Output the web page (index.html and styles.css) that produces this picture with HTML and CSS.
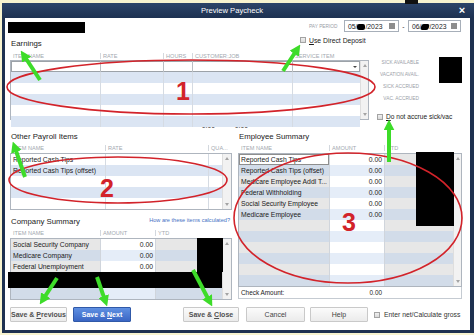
FILE: index.html
```html
<!DOCTYPE html>
<html>
<head>
<meta charset="utf-8">
<link rel="stylesheet" href="styles.css">
</head>
<body>
<div class="window">
  <div class="titlebar"><span class="title">Preview Paycheck</span><span class="close">×</span></div>
  <div class="pane">
    <div class="top">
      <div class="top-left">
        <div class="redact-name"></div>
        <div class="sec-title earn-title">Earnings</div>
      </div>
      <div class="top-right">
        <div class="period">
          <span class="cap period-label">PAY PERIOD</span>
          <span class="date"><span>05/<i class="scrib"></i>/2023</span><span class="cal"></span></span>
          <span class="dash">-</span>
          <span class="date date2"><span>06/<i class="scrib scrib2"></i>/2023</span><span class="cal"></span></span>
        </div>
        <div class="dd"><span class="cb"></span><span><u>U</u>se Direct Deposit</span></div>
      </div>
    </div>

    <div class="earn">
      <div class="earn-table">
        <div class="hdr earn-hdr"><span>ITEM NAME</span><span>RATE</span><span>HOURS</span><span>CUSTOMER:JOB</span><span>SERVICE ITEM</span></div>
        <div class="tbl earn-tbl">
          <div class="rows">
            <div class="row earn-row input-row"><span></span><span></span><span></span><span></span><span class="combo"><i class="tri"></i></span></div>
            <div class="row earn-row"><span></span><span></span><span></span><span></span><span></span></div>
            <div class="row earn-row"><span></span><span></span><span></span><span></span><span></span></div>
            <div class="row earn-row"><span></span><span></span><span></span><span></span><span></span></div>
            <div class="row earn-row"><span></span><span></span><span></span><span></span><span></span></div>
            <div class="row earn-row"><span></span><span></span><span></span><span></span><span></span></div>
          </div>
          <div class="scroll"><i class="up"></i><i class="down"></i></div>
        </div>
      </div>
      <div class="side">
        <div class="sick">
          <div class="sick-labels">
            <div>SICK AVAILABLE</div>
            <div>VACATION AVAIL.</div>
            <div>SICK ACCRUED</div>
            <div>VAC. ACCRUED</div>
          </div>
          <div class="sick-redact"></div>
        </div>
        <div class="accrue"><span class="cb"></span><span><u>D</u>o not accrue sick/vac</span></div>
      </div>
    </div>

    <div class="totals">
      <span class="tot-label">TOTALS</span>
      <span class="tot1">0.00</span>
      <span class="tot2">0.00</span>
      <span class="hrs">hrs</span>
    </div>

    <div class="lower">
      <div class="lcol">
        <div class="sec-title">Other Payroll Items</div>
        <div class="hdr opi-hdr"><span>ITEM NAME</span><span>RATE</span><span>QUA...</span></div>
        <div class="tbl opi-tbl">
          <div class="rows striped">
            <div class="row opi-row"><span>Reported Cash Tips</span><span></span><span></span></div>
            <div class="row opi-row"><span>Reported Cash Tips (offset)</span><span></span><span></span></div>
            <div class="row opi-row"><span></span><span></span><span></span></div>
            <div class="row opi-row"><span></span><span></span><span></span></div>
            <div class="row opi-row"><span></span><span></span><span></span></div>
          </div>
          <div class="scroll"><i class="up"></i><i class="down"></i></div>
        </div>

        <div class="cs-title">
          <span class="sec-title">Company Summary</span>
          <span class="link">How are these items calculated?</span>
        </div>
        <div class="hdr cs-hdr"><span>ITEM NAME</span><span>AMOUNT</span><span>YTD</span></div>
        <div class="tbl cs-tbl">
          <div class="rows sum-rows">
            <div class="row cs-row"><span>Social Security Company</span><span class="amt">0.00</span><span></span></div>
            <div class="row cs-row"><span>Medicare Company</span><span class="amt">0.00</span><span></span></div>
            <div class="row cs-row"><span>Federal Unemployment</span><span class="amt">0.00</span><span></span></div>
            <div class="redact-bar"></div>
            <div class="row cs-row blue"><span></span><span></span><span></span></div>
          </div>
          <div class="scroll"><i class="up"></i><i class="down"></i></div>
          <div class="redact-ytd"></div>
        </div>
      </div>

      <div class="rcol">
        <div class="sec-title">Employee Summary</div>
        <div class="hdr es-hdr"><span>ITEM NAME</span><span>AMOUNT</span><span>YTD</span></div>
        <div class="tbl es-tbl">
          <div class="rows sum-rows">
            <div class="row es-row selected"><span>Reported Cash Tips</span><span class="amt">0.00</span><span></span></div>
            <div class="row es-row"><span>Reported Cash Tips (offset)</span><span class="amt">0.00</span><span></span></div>
            <div class="row es-row"><span>Medicare Employee Addl T...</span><span class="amt">0.00</span><span></span></div>
            <div class="row es-row"><span>Federal Withholding</span><span class="amt">0.00</span><span></span></div>
            <div class="row es-row"><span>Social Security Employee</span><span class="amt">0.00</span><span></span></div>
            <div class="row es-row"><span>Medicare Employee</span><span class="amt">0.00</span><span></span></div>
            <div class="row es-row"><span></span><span></span><span></span></div>
            <div class="row es-row"><span></span><span></span><span></span></div>
            <div class="row es-row"><span></span><span></span><span></span></div>
            <div class="row es-row"><span></span><span></span><span></span></div>
            <div class="row es-row"><span></span><span></span><span></span></div>
            <div class="row es-row"><span></span><span></span><span></span></div>
          </div>
          <div class="scroll"><i class="up"></i><i class="down"></i></div>
          <div class="redact-es"></div>
        </div>
        <div class="check"><span>Check Amount:</span><span class="amt">0.00</span><span></span></div>
      </div>
    </div>

    <div class="buttons">
      <span class="btn b-prev"><span>Save &amp; <u>P</u>revious</span></span>
      <span class="btn primary b-next"><span>Save &amp; <u>N</u>ext</span></span>
      <span class="btn b-close"><span>Save &amp; <u>C</u>lose</span></span>
      <span class="btn b-cancel"><span>Cancel</span></span>
      <span class="btn b-help"><span>Help</span></span>
      <span class="cb b-cb"></span>
      <span class="net">Enter net/Calculate gross</span>
    </div>
  </div>
</div>

<svg class="annot" width="474" height="335" viewBox="0 0 474 335">
  <defs>
    <marker id="ah" viewBox="0 0 10 10" refX="4" refY="5" markerWidth="11" markerHeight="11" markerUnits="userSpaceOnUse" orient="auto">
      <path d="M0,0 L10,5 L0,10 z" fill="#3ddc29"/>
    </marker>
  </defs>
  <rect x="405" y="0" width="13" height="4" fill="#111"/>
  <g fill="none" stroke="#d2232a" stroke-width="1.6">
    <ellipse cx="191" cy="87" rx="184" ry="27"/>
    <ellipse cx="118" cy="180" rx="109" ry="23"/>
    <ellipse cx="348" cy="218" rx="114" ry="65"/>
  </g>
  <g class="num">
    <text x="176" y="100">1</text>
    <text x="100" y="197">2</text>
    <text x="342" y="231">3</text>
  </g>
  <g stroke="#3ddc29" stroke-width="4" marker-end="url(#ah)">
    <line x1="40" y1="80" x2="24.3" y2="56"/>
    <line x1="283" y1="71" x2="296.7" y2="50"/>
    <line x1="25" y1="177" x2="14.9" y2="147.7"/>
    <line x1="389" y1="162" x2="389" y2="126"/>
    <line x1="57" y1="278" x2="43.3" y2="299"/>
    <line x1="97" y1="277" x2="105" y2="300.3"/>
    <line x1="193" y1="270" x2="209.2" y2="300.7"/>
  </g>
</svg>
</body>
</html>
```

FILE: styles.css
```css
* { box-sizing: border-box; margin: 0; padding: 0; }
html, body { width: 474px; height: 335px; overflow: hidden; }
body {
  background: #f7f3cf;
  font-family: "Liberation Sans", Arial, sans-serif;
  font-size: 6.8px;
  color: #1b1b1b;
  position: relative;
}
i { font-style: normal; display: inline-block; }

.window {
  margin: 3px 0 0 2px;
  width: 472px;
  height: 330px;
  border: solid #1e3150;
  border-width: 0 4px 3px 3px;
  background: #fff;
  display: flex;
  flex-direction: column;
}
.titlebar {
  height: 15px;
  margin: 0 -4px 0 -3px;
  background: linear-gradient(#2c4469, #1d3151);
  color: #fff;
  display: flex;
  align-items: center;
}
.title { flex: 1; text-align: center; padding-left: 8px; font-size: 7.6px; }
.close { width: 16px; margin-right: 4px; text-align: center; font-size: 11px; font-weight: bold; line-height: 15px; }

.pane { flex: 1; position: relative; }

/* top */
.top { height: 33px; display: flex; }
.top-left { width: 290px; }
.redact-name { margin: 4px 0 0 3px; width: 77px; height: 11px; background: #000; }
.sec-title { font-size: 7.8px; line-height: 10px; color: #222; }
.earn-title { margin: 6px 0 0 6px; }
.top-right { flex: 1; }
.period { display: flex; align-items: center; height: 12px; margin-top: 2px; }
.cap { text-transform: uppercase; color: #9aa0a8; }
.period-label { width: 49px; padding-left: 14px; font-size: 4.8px; }
.date {
  width: 55px; height: 12px;
  border: 1px solid #a7afb9;
  display: flex; align-items: center;
  padding-left: 3px;
  font-size: 6.8px; color: #222;
}
.date2 { width: 53px; }
.scrib { width: 8px; height: 6px; background: #000; border-radius: 2px; vertical-align: -1px; }
.scrib2 { transform: skewX(-15deg); }
.cal { margin-left: auto; margin-right: 3px; width: 6px; height: 6px; background: #8d8d8d; }
.dash { width: 9px; text-align: center; color: #333; }
.dd { display: flex; align-items: center; gap: 3px; height: 8px; margin-top: 4px; padding-left: 5px; }
.cb {
  display: inline-block;
  width: 6px; height: 6px;
  border: 1px solid #a3a3a3;
  background: linear-gradient(#f0f0f0, #d9d9d9);
  flex: none;
}

/* headers & tables */
.hdr {
  display: grid;
  align-items: center;
  font-size: 5.6px;
  color: #a3a9b0;
  text-transform: uppercase;
}
.hdr span { padding-left: 2px; border-left: 1px solid #d3d8de; line-height: 6px; white-space: nowrap; overflow: hidden; }
.hdr span:first-child { border-left: none; padding-left: 3px; }
.tbl { border: 1px solid #aeb5be; display: flex; position: relative; }
.rows { flex: 1; }
.row { height: 11px; display: grid; align-items: stretch; }
.row > span {
  border-left: 1px solid #d5dbe3;
  padding-left: 2px;
  line-height: 11px;
  white-space: nowrap;
  overflow: hidden;
}
.row > span:first-child { border-left: none; }
.scroll {
  width: 9px;
  background: #f2f2f2;
  border-left: 1px solid #dedede;
  display: flex;
  flex-direction: column;
  justify-content: space-between;
  align-items: center;
  padding: 3px 0;
}
.up { width: 0; height: 0; border-style: solid; border-color: transparent; border-width: 0 2.5px 3px; border-bottom-color: #a4a4a4; }
.down { width: 0; height: 0; border-style: solid; border-color: transparent; border-width: 3px 2.5px 0; border-top-color: #a4a4a4; }

/* earnings */
.earn { height: 69px; display: flex; }
.earn-table { margin-left: 5px; width: 359px; }
.earn-hdr { height: 9px; grid-template-columns: 90px 63px 29px 100px 1fr; }
.earn-tbl { height: 60px; }
.earn-tbl .scroll { width: 8px; }
.earn-row { grid-template-columns: 89px 63px 29px 100px 1fr; }
.earn-tbl .row:nth-child(even) { background: #dbe5f3; }
.input-row { box-shadow: inset 0 0 0 1px #9ca2a8; }
.input-row > span { border-left-color: #b9bec4; }
.combo { display: flex; justify-content: flex-end; align-items: center; padding-right: 3px; }
.tri { width: 0; height: 0; border-style: solid; border-color: transparent; border-width: 2.5px 2px 0; border-top-color: #444; }

.side { margin-left: 3px; padding-top: 6px; }
.sick { display: flex; }
.sick-labels { width: 47px; text-align: right; font-size: 4.8px; color: #9aa0a8; }
.sick-labels div { line-height: 12px; white-space: nowrap; }
.sick-redact { margin-left: 20px; width: 23px; height: 26px; background: #000; }
.accrue { display: flex; align-items: center; gap: 3px; margin-top: 8px; padding-left: 5px; height: 7px; font-size: 6.6px; }

/* totals */
.totals { height: 11px; display: flex; align-items: center; }
.tot-label { width: 94px; text-align: right; font-size: 4.9px; color: #9aa0a8; }
.tot1 { width: 116px; text-align: right; }
.tot2 { width: 33px; text-align: right; }
.hrs { font-size: 5px; margin-left: 4px; align-self: flex-start; color: #666; }

/* lower */
.lower { height: 170px; display: flex; }
.lcol { margin-left: 5px; width: 222px; }
.rcol { margin-left: 6px; width: 224px; }
.lcol > .sec-title, .rcol > .sec-title { margin-top: 1px; padding-left: 1px; }
.opi-hdr, .cs-hdr, .es-hdr { height: 11px; }
.opi-hdr { grid-template-columns: 95px 103px 1fr; }
.opi-tbl { height: 57px; }
.opi-row { grid-template-columns: 94px 103px 1fr; }
.striped .row:nth-child(even) { background: #dbe5f3; }

.cs-title { display: flex; justify-content: space-between; align-items: flex-start; margin-top: 7px; height: 10px; padding-left: 1px; }
.link { font-size: 5.6px; line-height: 7px; color: #4472c4; padding-right: 2px; }
.cs-hdr { grid-template-columns: 90px 55px 1fr; }
.cs-tbl { height: 62px; }
.cs-row { grid-template-columns: 89px 55px 1fr; }

.sum-rows .row > span:nth-child(1), .sum-rows .row > span:nth-child(3) { background: #e7e7e7; }
.sum-rows .row > span:nth-child(2) { background: #fff; }
.sum-rows .row:nth-child(even) > span:nth-child(1),
.sum-rows .row:nth-child(even) > span:nth-child(3),
.sum-rows .row.blue > span:nth-child(1),
.sum-rows .row.blue > span:nth-child(3) { background: #d2dce9; }
.sum-rows .row:nth-child(even) > span:nth-child(2),
.sum-rows .row.blue > span:nth-child(2) { background: #e5edf8; }
.sum-rows .row > span { border-left-color: #d0d5dc; }
.amt { text-align: right; padding-right: 2px; }
.row > span.amt { padding-left: 0; padding-right: 2px; }
.redact-bar { height: 16px; margin-left: -3px; width: 214px; background: #000; }
.redact-ytd { position: absolute; top: -1px; left: 186px; width: 26px; height: 34px; background: #000; }

.es-hdr { grid-template-columns: 91px 55px 1fr; }
.es-tbl { height: 134px; }
.es-tbl .scroll { width: 8px; }
.es-row { grid-template-columns: 90px 55px 1fr; }
.sum-rows .row.selected > span:nth-child(1) { background: #fff; box-shadow: inset 0 0 0 1px #8e8e8e; }
.redact-es { position: absolute; top: -2px; left: 177px; width: 38px; height: 74px; background: #000; }
.check {
  height: 12px;
  border: 1px solid #c5cbd2;
  border-top: none;
  display: grid;
  grid-template-columns: 90px 55px 1fr;
  align-items: center;
  font-size: 6.4px;
}
.check span:first-child { padding-left: 2px; }

/* buttons */
.buttons { display: flex; align-items: center; margin-top: 6px; height: 15px; }
.btn {
  height: 15px;
  display: flex; align-items: center; justify-content: center;
  border: 1px solid #c9c9c9;
  border-radius: 1px;
  background: linear-gradient(#fbfbfb, #ebebeb);
  font-size: 7px; font-weight: bold; color: #505050;
  white-space: nowrap;
}
.btn.primary {
  background: linear-gradient(#5f90e2, #3a66c4);
  border-color: #3059a8;
  color: #fff;
}
.b-prev { margin-left: 5px; width: 57px; }
.b-next { margin-left: 6px; width: 58px; }
.b-close { margin-left: 52px; width: 56px; }
.b-cancel { margin-left: 7px; width: 59px; font-weight: normal; color: #444; }
.b-help { margin-left: 5px; width: 58px; font-weight: normal; color: #444; }
.b-cb { margin-left: 6px; }
.net { margin-left: 4px; font-size: 6.8px; color: #333; white-space: nowrap; }

/* annotations overlay */
.annot { position: absolute; top: 0; left: 0; pointer-events: none; }
.num text { font-family: "Liberation Sans", Arial, sans-serif; font-weight: bold; font-size: 25px; fill: #d2232a; }
```
